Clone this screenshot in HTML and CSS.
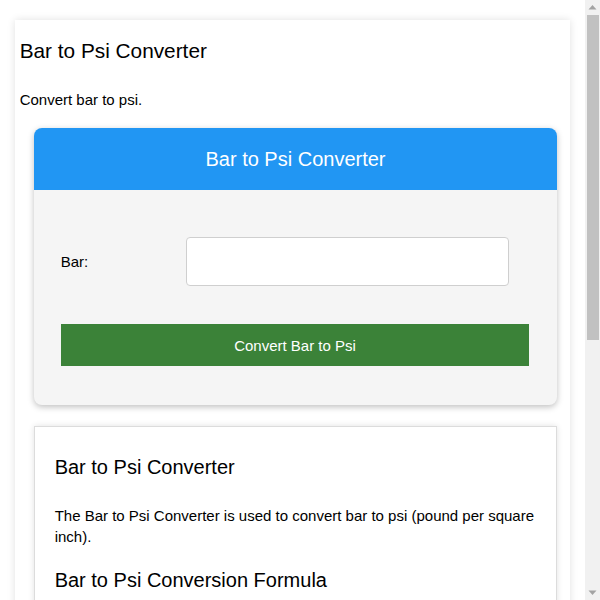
FILE: index.html
```html
<!DOCTYPE html>
<html lang="en">
<head>
<meta charset="utf-8">
<title>Bar to Psi Converter</title>
<link rel="stylesheet" href="styles.css">
</head>
<body>
<div class="page">
  <h1 class="page-title">Bar to Psi Converter</h1>
  <p class="intro">Convert bar to psi.</p>

  <div class="converter">
    <div class="converter-head">Bar to Psi Converter</div>
    <div class="converter-body">
      <div class="field">
        <label class="field-label" for="bar">Bar:</label>
        <input class="field-input" id="bar" type="text">
      </div>
      <button class="convert-btn" type="button">Convert Bar to Psi</button>
    </div>
  </div>

  <div class="info">
    <h2 class="info-title">Bar to Psi Converter</h2>
    <p class="info-text">The Bar to Psi Converter is used to convert bar to psi (pound per square inch).</p>
    <h2 class="info-subtitle">Bar to Psi Conversion Formula</h2>
    <p class="info-text">1 bar = 14.503773773 psi</p>
    <p class="info-text">psi = bar × 14.503773773</p>
    <h2 class="info-subtitle">Example</h2>
    <p class="info-text">Convert 5 bar to psi:</p>
    <p class="info-text">5 bar = 5 × 14.503773773 psi = 72.518868865 psi</p>
  </div>
</div>

<div class="scrollbar" aria-hidden="true">
  <svg class="scroll-arrow" width="15" height="15" viewBox="0 0 15 15"><polygon points="3.5,9.5 11.5,9.5 7.5,5" fill="#a3a3a3"/></svg>
  <div class="scroll-thumb"></div>
  <div class="scroll-space"></div>
  <svg class="scroll-arrow" width="15" height="15" viewBox="0 0 15 15"><polygon points="3.5,5.5 11.5,5.5 7.5,10" fill="#a3a3a3"/></svg>
</div>
</body>
</html>
```
FILE: styles.css
```css
html {
  margin: 0;
  padding: 0;
  background: #ffffff;
}

body {
  margin: 0;
  padding: 0 15px 0 0;
  background: #ffffff;
  font-family: "Liberation Sans", Arial, sans-serif;
  font-size: 15px;
  color: #000;
}

.page {
  width: 95%;
  margin: 20px auto;
  padding: 5px 5px 20px;
  box-sizing: border-box;
  background: #fff;
  box-shadow: 0 0 8px rgba(0, 0, 0, 0.12);
}

.page-title {
  font-size: 20.8px;
  font-weight: normal;
  line-height: 24px;
  margin: 14px 0 0;
}

.intro {
  line-height: 17px;
  margin: 28px 0 0;
}

.converter {
  margin: 20px 8px 0 14px;
  border-radius: 8px;
  overflow: hidden;
  background: #f5f5f5;
  box-shadow: 0 2px 6px rgba(0, 0, 0, 0.25);
}

.converter-head {
  background: #2196f3;
  color: #fff;
  text-align: center;
  font-size: 20px;
  line-height: 24px;
  padding: 19px 0;
}

.converter-body {
  padding: 47px 28px 39px 27px;
}

.field {
  display: flex;
  align-items: center;
}

.field-label {
  width: 125px;
  flex: none;
}

.field-input {
  width: 323px;
  height: 49px;
  box-sizing: border-box;
  border: 1px solid #cfcfcf;
  border-radius: 4px;
  background: #fff;
  font: inherit;
  padding: 0 10px;
}

.convert-btn {
  display: block;
  width: 100%;
  height: 42px;
  margin-top: 38px;
  border: none;
  background: #3b8238;
  color: #fff;
  font-family: inherit;
  font-size: 15px;
}

.info {
  margin: 21px 8px 0 14px;
  padding: 29px 20px 20px;
  background: #fff;
  border: 1px solid #dcdcdc;
  box-shadow: 0 0 6px rgba(0, 0, 0, 0.12);
}

.info-title,
.info-subtitle {
  font-size: 20px;
  font-weight: normal;
  line-height: 23px;
  margin: 0;
}

.info-subtitle {
  margin-top: 22px;
}

.info-text {
  line-height: 21px;
  margin: 26px 0 0;
}

.info-subtitle + .info-text {
  margin-top: 18px;
}

.info-text + .info-text {
  margin-top: 12px;
}

/* drawn browser scrollbar overlay */
.scrollbar {
  position: fixed;
  top: 0;
  right: 0;
  width: 15px;
  height: 100vh;
  background: #f1f1f1;
  display: flex;
  flex-direction: column;
}

.scroll-arrow {
  display: block;
  flex: none;
}

.scroll-thumb {
  flex: none;
  height: 325px;
  margin: 0 1px 0 2px;
  background: #c1c1c1;
}

.scroll-space {
  flex: 1;
}
```
